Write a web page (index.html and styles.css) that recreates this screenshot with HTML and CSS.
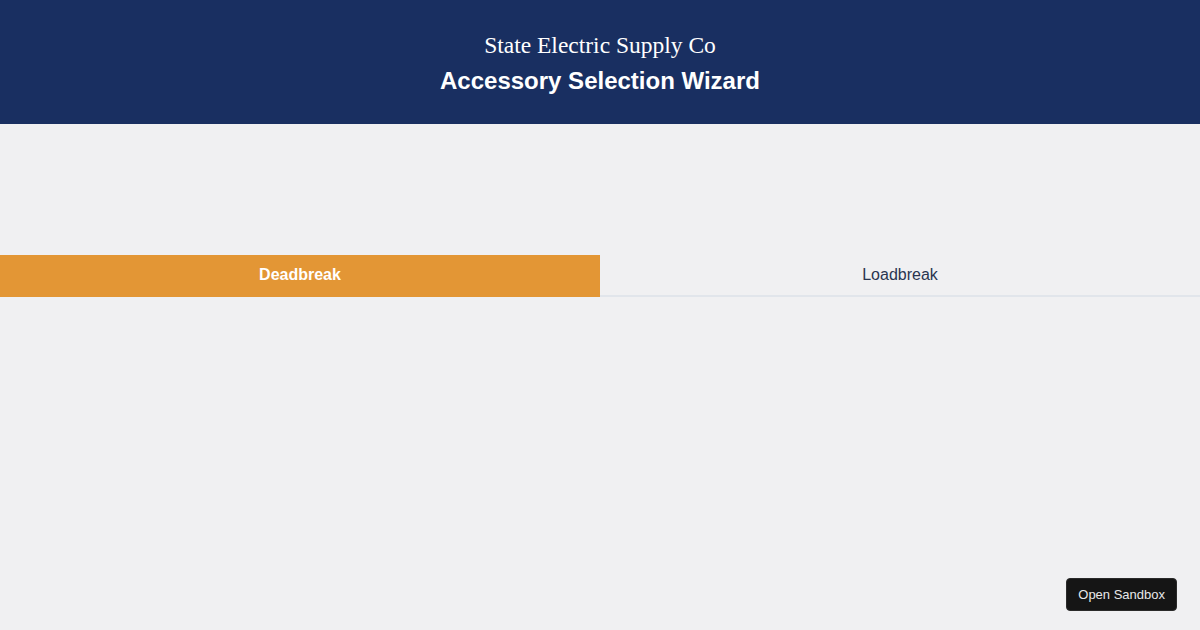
FILE: index.html
```html
<!DOCTYPE html>
<html lang="en">
<head>
    <meta charset="UTF-8">
    <meta name="viewport" content="width=device-width, initial-scale=1.0">
    <title>Accessory Selection Wizard</title>
    <link rel="stylesheet" href="styles.css">
</head>
<body>

    <header class="site-header">
        <div class="brand">State Electric Supply Co</div>
        <h1>Accessory Selection Wizard</h1>
    </header>

    <main class="wizard">
        <div class="tabs">
            <button class="tab active">Deadbreak</button>
            <button class="tab">Loadbreak</button>
        </div>
    </main>

    <button class="sandbox-btn">Open Sandbox</button>

</body>
</html>
```

FILE: styles.css
```css
body {
    font-family: 'Liberation Sans', Arial, sans-serif;
    background-color: #f0f0f2;
    margin: 0;
    padding: 0;
    height: 100vh;
    overflow: hidden;
    color: #1f2a44;
}

.site-header {
    background-color: #192f61;
    color: #fff;
    height: 124px;
    box-sizing: border-box;
    padding-top: 31px;
    text-align: center;
}

.brand {
    font-family: 'Liberation Serif', 'Times New Roman', serif;
    font-size: 23.5px;
    line-height: 28px;
}

h1 {
    font-size: 24px;
    font-weight: bold;
    margin: 8px 0 0;
    line-height: 28px;
}

.wizard {
    padding-top: 131px;
}

.tabs {
    display: flex;
}

.tab {
    flex: 1;
    height: 42px;
    border: none;
    border-bottom: 2px solid #e1e5eb;
    background: transparent;
    font-family: 'Liberation Sans', Arial, sans-serif;
    font-size: 16px;
    color: #2a3550;
    cursor: pointer;
    padding: 0;
}

.tab.active {
    background-color: #e39635;
    border-bottom-color: #e39635;
    color: #fff;
    font-weight: bold;
}

.sandbox-btn {
    position: fixed;
    right: 23px;
    bottom: 19px;
    background-color: #151515;
    color: #e8e8ea;
    border: 1px solid #2a2a2a;
    border-radius: 4px;
    font-family: 'Liberation Sans', Arial, sans-serif;
    font-size: 13px;
    padding: 0 11px;
    height: 33px;
    cursor: pointer;
}
```
